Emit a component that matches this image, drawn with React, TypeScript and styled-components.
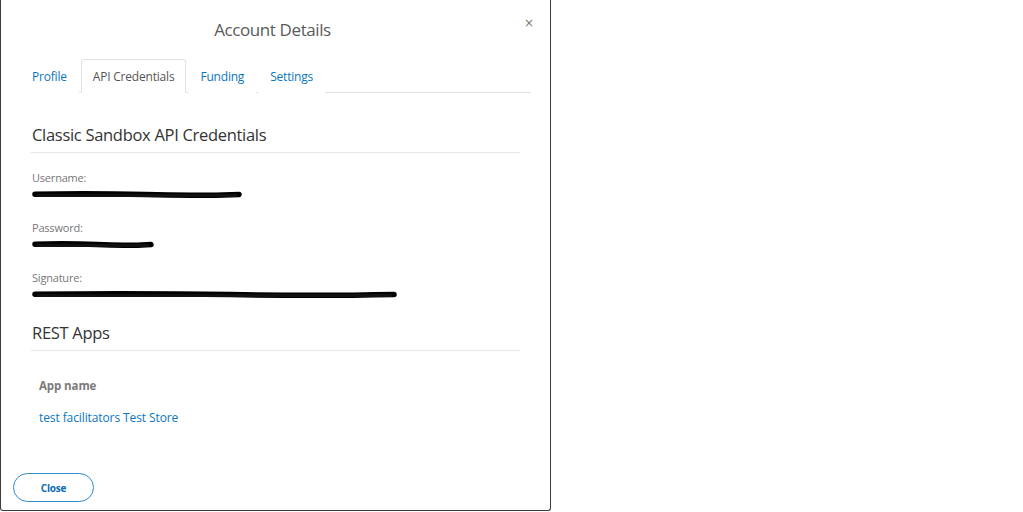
import * as React from 'react'
import styled, { createGlobalStyle } from 'styled-components'

const GlobalStyle = createGlobalStyle`
  html, body {
    margin: 0;
    padding: 0;
    background: #fff;
  }
  body {
    font-family: 'Open Sans', 'Noto Sans', sans-serif;
  }
`

const Page = styled.div`
  width: 1023px;
  height: 512px;
  display: flex;
  align-items: flex-start;
`

const Modal = styled.div`
  box-sizing: border-box;
  width: 551px;
  height: 511px;
  border: 1px solid #3c3c3c;
  border-top: none;
  border-radius: 0 0 3px 3px;
  display: flex;
  flex-direction: column;
  position: relative;
  background: #fff;
`

const Header = styled.div`
  height: 59px;
  display: flex;
  justify-content: center;
  padding: 18px 6px 0 0;
  box-sizing: border-box;
`

const Title = styled.h2`
  margin: 0;
  font-size: 17px;
  font-weight: 400;
  color: #5a5a5a;
  line-height: 24px;
  letter-spacing: -0.4px;
`

const CloseX = styled.button`
  position: absolute;
  top: 15px;
  right: 16px;
  border: none;
  background: none;
  padding: 0;
  font-size: 12px;
  line-height: 16px;
  color: #777;
  font-family: 'DejaVu Sans', sans-serif;
`

const TabBar = styled.ul`
  display: flex;
  margin: 0 19px;
  padding: 0;
  list-style: none;
  border-bottom: 1px solid #e2e2e2;
  height: 33px;
`

const Tab = styled.li<{ active?: boolean }>`
  box-sizing: border-box;
  height: 34px;
  margin-right: 2px;
  padding: 0 11px;
  display: flex;
  align-items: center;
  font-size: 12px;
  letter-spacing: -0.2px;
  color: ${p => (p.active ? '#555' : '#0a76c2')};
  background: #fff;
  border: 1px solid ${p => (p.active ? '#e2e2e2' : 'transparent')};
  border-bottom-color: ${p => (p.active ? '#fff' : 'transparent')};
  border-radius: 3px 3px 0 0;
`

const Body = styled.div`
  padding: 0 30px;
  flex: 1;
`

const SectionTitle = styled.h3<{ top: number }>`
  margin: ${p => p.top}px 0 0;
  padding: 0 1px 6px;
  font-size: 16.5px;
  font-weight: 400;
  color: #333;
  line-height: 22px;
  letter-spacing: -0.3px;
  border-bottom: 1px solid #e6e6e6;
`

const Field = styled.div`
  margin-top: 16px;
  padding-left: 1px;

  & + & {
    margin-top: 20px;
  }
`

const Label = styled.div`
  font-size: 11px;
  line-height: 17px;
  letter-spacing: -0.2px;
  color: #777;
`

const Redacted = styled.svg`
  display: block;
  margin-top: 4px;
`

const AppTable = styled.div`
  padding: 26px 8px 0;
`

const ColHead = styled.div`
  font-size: 11.5px;
  font-weight: 700;
  color: #7a7a7a;
  line-height: 17px;
  letter-spacing: -0.1px;
`

const AppLink = styled.a`
  display: block;
  margin-top: 15px;
  font-size: 12px;
  line-height: 18px;
  letter-spacing: -0.1px;
  color: #0a76c2;
  text-decoration: none;
`

const Footer = styled.div`
  padding: 0 0 8px 12px;
`

const CloseButton = styled.button`
  box-sizing: border-box;
  width: 81px;
  height: 29px;
  border: 1px solid #2f8bd0;
  border-radius: 15px;
  background: #fff;
  color: #0a6cb6;
  font-family: 'Open Sans', 'Noto Sans', sans-serif;
  font-size: 10px;
  font-weight: 700;
  letter-spacing: -0.2px;
`

const Scribble: React.FC<{ width: number }> = ({ width }) => (
  <Redacted width={width + 4} height={9} viewBox={`0 0 ${width + 4} 9`}>
    <path
      d={`M3 4.2 Q ${width * 0.3} 3.2 ${width * 0.55} 4.6 T ${width + 1} 4.4`}
      stroke="#000"
      strokeWidth={5.5}
      strokeLinecap="round"
      fill="none"
    />
    <path
      d={`M6 5.4 L ${width - 2} 5.6`}
      stroke="#111"
      strokeWidth={3}
      strokeLinecap="round"
      fill="none"
    />
  </Redacted>
)

const fields = [
  { id: 'user', label: 'Username:', width: 206 },
  { id: 'pass', label: 'Password:', width: 118 },
  { id: 'sig', label: 'Signature:', width: 361 },
]

const tabs = [
  { id: 'profile', name: 'Profile' },
  { id: 'api', name: 'API Credentials', active: true },
  { id: 'funding', name: 'Funding' },
  { id: 'settings', name: 'Settings' },
]

export default function App() {
  return (
    <Page>
      <GlobalStyle />
      <Modal>
        <Header>
          <Title>Account Details</Title>
        </Header>
        <CloseX>×</CloseX>
        <TabBar>
          {tabs.map(t => (
            <Tab key={t.id} active={t.active}>
              {t.name}
            </Tab>
          ))}
        </TabBar>
        <Body>
          <SectionTitle top={31}>Classic Sandbox API Credentials</SectionTitle>
          {fields.map(f => (
            <Field key={f.id}>
              <Label>{f.label}</Label>
              <Scribble width={f.width} />
            </Field>
          ))}
          <SectionTitle top={23}>REST Apps</SectionTitle>
          <AppTable>
            <ColHead>App name</ColHead>
            <AppLink href="#">test facilitators Test Store</AppLink>
          </AppTable>
        </Body>
        <Footer>
          <CloseButton>Close</CloseButton>
        </Footer>
      </Modal>
    </Page>
  )
}
